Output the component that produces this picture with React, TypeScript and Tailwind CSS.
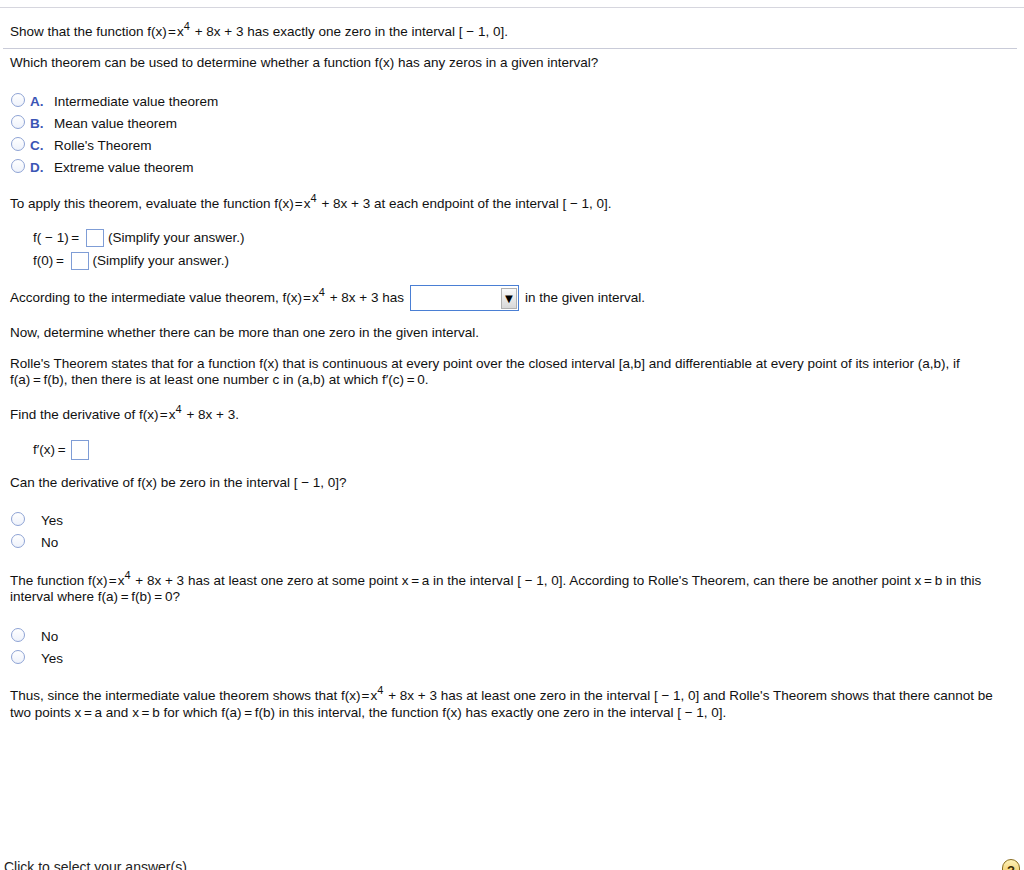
import React from "react";

const T = "\u2009";
const H = "\u200A";

function Fx() {
  return (
    <span className="whitespace-nowrap">
      f(x){H}={H}x<sup className="top-[-6px] text-[11px] mr-[1px]">4</sup> + 8x + 3
    </span>
  );
}

function Radio() {
  return (
    <span className="inline-block w-[14px] h-[14px] rounded-full border-[1.5px] border-[#8ea3d4] bg-gradient-to-b from-white to-[#eef2fb]" />
  );
}

function Box({ w = 18, h = 18 }: { w?: number; h?: number }) {
  return (
    <span
      className="inline-block border border-[#7f9dd6] bg-white align-middle"
      style={{ width: w, height: h }}
    />
  );
}

function Choice({ letter, text }: { letter: string; text: string }) {
  return (
    <div className="flex items-center h-[22px]">
      <span className="ml-[11px]">
        <Radio />
      </span>
      <span className="ml-[5px] w-[24px] font-bold text-[#3b55b5]">{letter}</span>
      <span>{text}</span>
    </div>
  );
}

function YesNo({ text }: { text: string }) {
  return (
    <div className="flex items-center h-[22px]">
      <span className="ml-[11px]">
        <Radio />
      </span>
      <span className="ml-[16px]">{text}</span>
    </div>
  );
}

export default function App() {
  return (
    <div className="relative w-[1024px] h-[870px] overflow-hidden bg-white text-[13.5px] leading-[16px] text-[#111] font-['Liberation_Sans',Arial,sans-serif]">
      <div className="mt-[7px] h-px bg-[#d6d6de]" />
      <p className="mt-[16px] ml-[10px]">
        Show that the function <Fx /> has exactly one zero in the interval [ − 1, 0].
      </p>
      <div className="mt-[8px] mx-[3px] w-[1014px] h-px bg-[#c9cbd8]" />
      <p className="mt-[6px] ml-[10px]">
        Which theorem can be used to determine whether a function f(x) has any zeros in a given interval?
      </p>

      <div className="mt-[20px]">
        <Choice letter="A." text="Intermediate value theorem" />
        <Choice letter="B." text="Mean value theorem" />
        <Choice letter="C." text="Rolle's Theorem" />
        <Choice letter="D." text="Extreme value theorem" />
      </div>

      <p className="mt-[17px] ml-[10px]">
        To apply this theorem, evaluate the function <Fx /> at each endpoint of the interval [ − 1, 0].
      </p>

      <div className="mt-[14px] ml-[33px]">
        <div className="flex items-center h-[23px] gap-[4px]">
          <span>f( − 1){T}={T}</span>
          <Box w={18} h={18} />
          <span>(Simplify your answer.)</span>
        </div>
        <div className="flex items-center h-[23px] gap-[4px]">
          <span>f(0){T}={T}</span>
          <Box w={18} h={18} />
          <span>(Simplify your answer.)</span>
        </div>
      </div>

      <div className="mt-[13px] ml-[10px] flex items-center h-[26px]">
        <span>
          According to the intermediate value theorem, <Fx /> has
        </span>
        <span className="ml-[6px] flex items-center w-[109px] h-[26px] border border-[#4a7fd4] bg-white">
          <span className="flex-1" />
          <span className="mr-[1px] flex items-center justify-center w-[16px] h-[21px] bg-gradient-to-b from-[#fafafa] to-[#d8d8d8] border border-[#b0b0b0] text-[13px] leading-none text-black">
            ▼
          </span>
        </span>
        <span className="ml-[6px]">in the given interval.</span>
      </div>

      <p className="mt-[14px] ml-[10px]">Now, determine whether there can be more than one zero in the given interval.</p>

      <p className="mt-[15px] ml-[10px] w-[975px]">
        Rolle's Theorem states that for a function f(x) that is continuous at every point over the closed interval [a,b] and differentiable at every point of its interior (a,b), if{" "}
        <span className="whitespace-nowrap">f(a){T}={T}f(b),</span> then there is at least one number c in (a,b) at which f′(c){T}={T}0.
      </p>

      <p className="mt-[19px] ml-[10px]">
        Find the derivative of <Fx />.
      </p>

      <div className="mt-[16px] ml-[33px] flex items-center h-[22px] gap-[3px]">
        <span>f′(x){T}={T}</span>
        <Box w={18} h={20} />
      </div>

      <p className="mt-[14px] ml-[10px]">Can the derivative of f(x) be zero in the interval [ − 1, 0]?</p>

      <div className="mt-[19px]">
        <YesNo text="Yes" />
        <YesNo text="No" />
      </div>

      <p className="mt-[19px] ml-[10px] w-[990px]">
        The function <Fx /> has at least one zero at some point x{T}={T}a in the interval [ − 1, 0]. According to Rolle's Theorem, can there be another point x{T}={T}b in this interval where f(a){T}={T}f(b){T}={T}0?
      </p>

      <div className="mt-[21px]">
        <YesNo text="No" />
        <YesNo text="Yes" />
      </div>

      <p className="mt-[17px] ml-[10px] w-[995px] leading-[17px]">
        Thus, since the intermediate value theorem shows that <Fx /> has at least one zero in the interval [ − 1, 0] and Rolle's Theorem shows that there cannot be two points x{T}={T}a and x{T}={T}b for which f(a){T}={T}f(b) in this interval, the function f(x) has exactly one zero in the interval [ − 1, 0].
      </p>

      <div className="mt-[138px] flex items-start justify-between pl-[4px] pr-[4px]">
        <span className="text-[14px] text-[#222]">Click to select your answer(s).</span>
        <span className="flex items-center justify-center w-[18px] h-[22px] rounded-full border border-[#8a6d1e] bg-gradient-to-b from-[#fff3b8] to-[#e8b93c] text-[13px] font-bold leading-none text-[#3a2a00]">
          ?
        </span>
      </div>
    </div>
  );
}
